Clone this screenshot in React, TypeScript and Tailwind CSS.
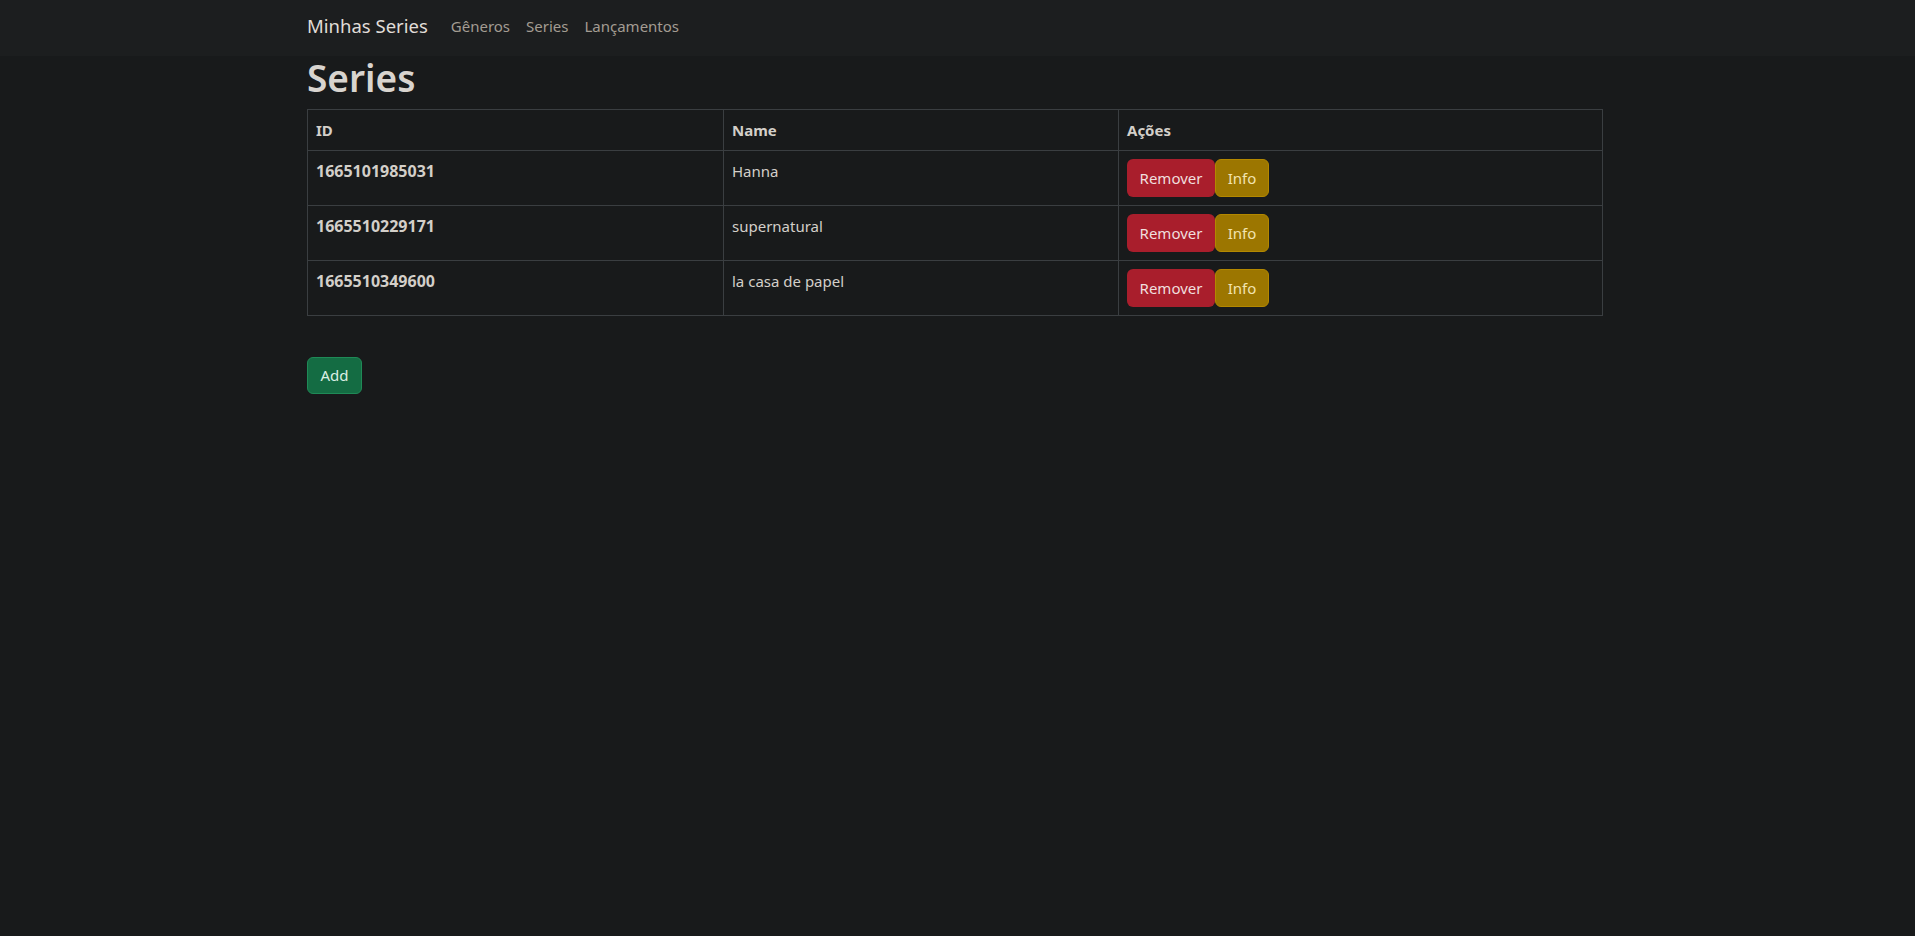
import React from 'react';

type Serie = { id: string; name: string };

const series: Serie[] = [
    { id: '1665101985031', name: 'Hanna' },
    { id: '1665510229171', name: 'supernatural' },
    { id: '1665510349600', name: 'la casa de papel' },
];

const NavBar: React.FC = () => (
    <nav className="h-[56px] bg-[#1c1e1f] flex items-center pb-[4px]">
        <div className="ml-[307px] flex items-center">
            <span className="text-[18.5px] text-[#e0ddd8] mr-[23px]">Minhas Series</span>
            <div className="flex items-center gap-[16px] text-[15px] text-[#a39c92]">
                <a>Gêneros</a>
                <a>Series</a>
                <a>Lançamentos</a>
            </div>
        </div>
    </nav>
);

const cell = 'border border-[#3a3e41] px-[8px]';

const SeriesTable: React.FC = () => (
    <table className="w-[1295px] table-fixed border-collapse text-[15px] text-[#d3cfc9]">
        <colgroup>
            <col className="w-[416px]" />
            <col className="w-[395px]" />
            <col className="w-[484px]" />
        </colgroup>
        <thead>
            <tr className="h-[41px]">
                <th className={`${cell} text-left font-bold align-middle`}>ID</th>
                <th className={`${cell} text-left font-bold align-middle`}>Name</th>
                <th className={`${cell} text-left font-bold align-middle`}>Ações</th>
            </tr>
        </thead>
        <tbody>
            {series.map((s) => (
                <tr key={s.id} className="h-[55px]">
                    <td className={`${cell} pt-[9px] align-top font-bold text-[16px] leading-[22px]`}>{s.id}</td>
                    <td className={`${cell} pt-[9px] align-top leading-[22px]`}>{s.name}</td>
                    <td className={`${cell} py-[8px] align-top`}>
                        <div className="flex">
                            <button className="h-[38px] w-[88px] rounded-[6px] bg-[#a91e2c] text-[15px] text-[#f0dede]">
                                Remover
                            </button>
                            <button className="h-[38px] w-[54px] rounded-[6px] border border-[#b38800] bg-[#9c7600] text-[15px] text-[#f2e4b0]">
                                Info
                            </button>
                        </div>
                    </td>
                </tr>
            ))}
        </tbody>
    </table>
);

export default function App() {
    return (
        <div className="min-h-[936px] bg-[#181a1b] font-['Noto_Sans','Open_Sans',sans-serif]">
            <NavBar />
            <main className="ml-[307px] pt-[2px]">
                <h1 className="text-[37px] leading-[40px] font-semibold text-[#d8d4cf] mb-[11px]">Series</h1>
                <SeriesTable />
                <button className="mt-[41px] h-[37px] w-[55px] rounded-[6px] border border-[#1f8a57] bg-[#146c43] text-[15px] text-[#dcefe4]">
                    Add
                </button>
            </main>
        </div>
    );
}
